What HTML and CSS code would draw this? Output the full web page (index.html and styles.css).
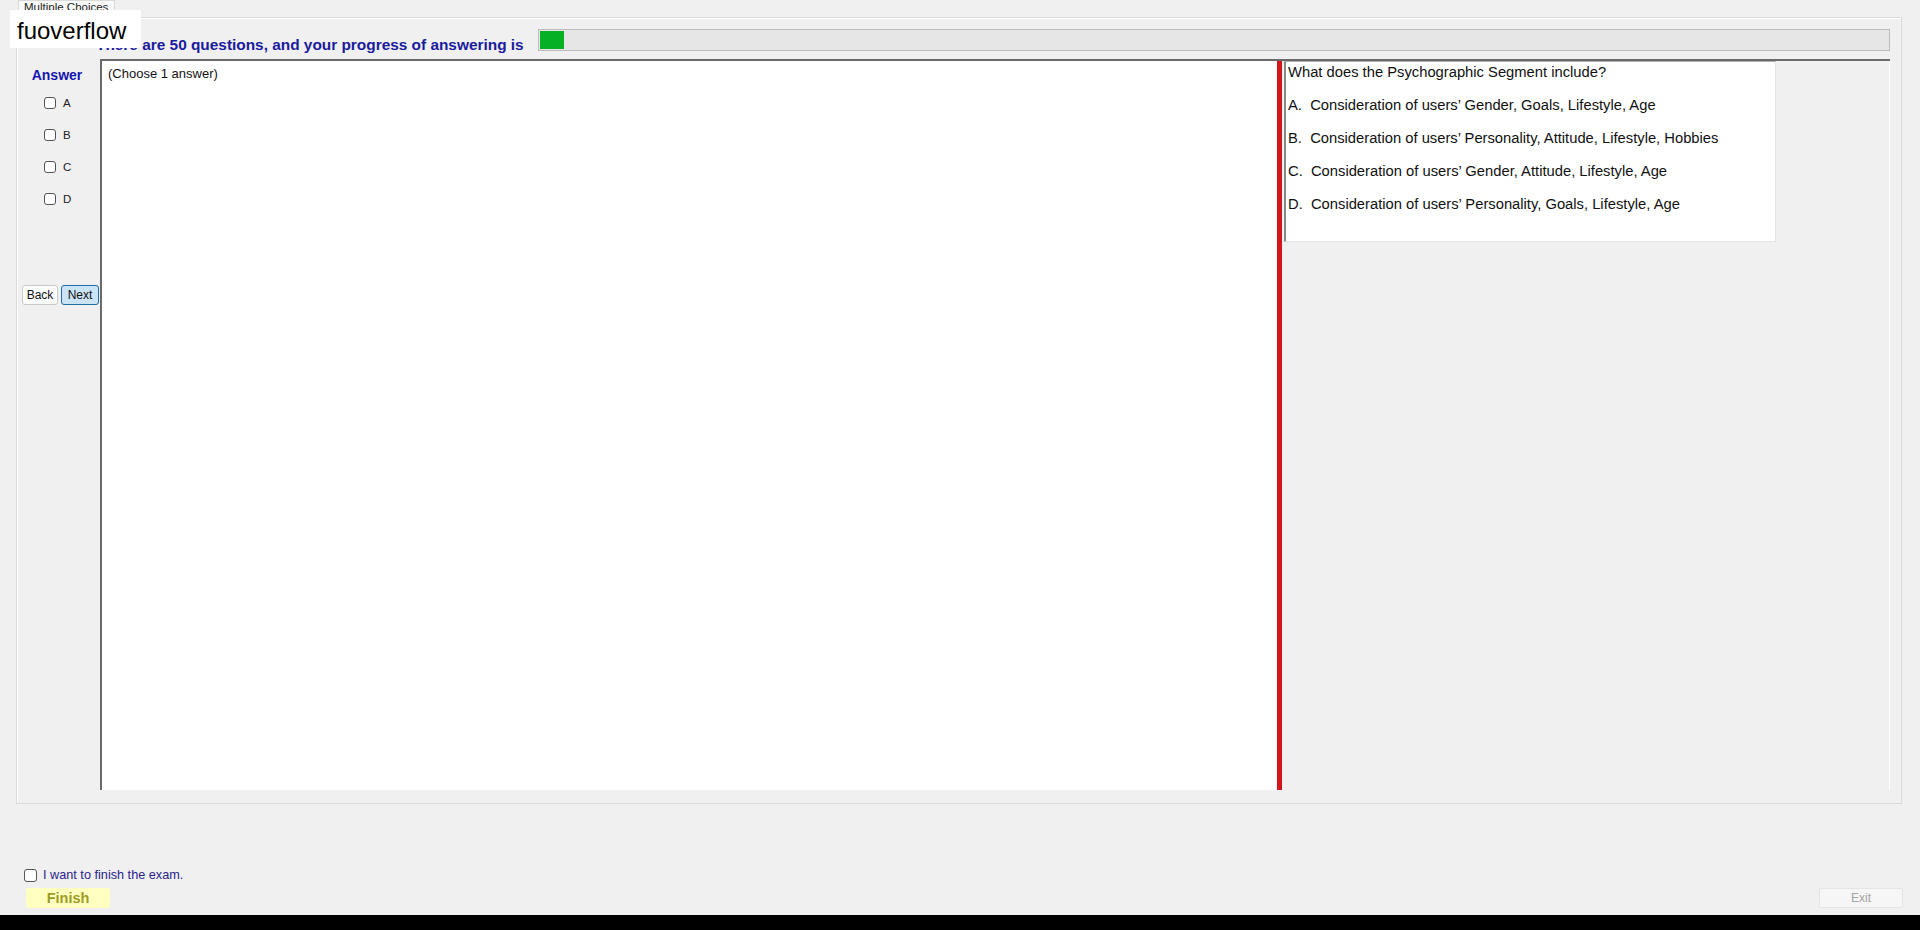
FILE: index.html
```html
<!DOCTYPE html>
<html lang="en">
<head>
  <meta charset="UTF-8">
  <meta name="viewport" content="width=device-width, initial-scale=1.0">
  <title>Multiple Choices</title>
  <link rel="stylesheet" href="styles.css">
</head>
<body>

  <div class="window">
    <div class="tab-strip">
      <div class="tab">Multiple Choices</div>
    </div>

    <div class="tab-panel">
      <div class="progress-row">
        <h1 class="progress-title">There are 50 questions, and your progress of answering is</h1>
        <div class="progress-bar"><div class="progress-fill" style="width: 24px"></div></div>
      </div>

      <div class="content-row">
        <aside class="answer-side">
          <div class="answer-title">Answer</div>
          <ul class="options">
            <li><span class="check"></span>A</li>
            <li><span class="check"></span>B</li>
            <li><span class="check"></span>C</li>
            <li><span class="check"></span>D</li>
          </ul>
          <div class="nav-buttons">
            <button class="btn">Back</button>
            <button class="btn btn-active">Next</button>
          </div>
        </aside>

        <main class="question-frame">
          <div class="question-area">(Choose 1 answer)</div>
          <div class="splitter"></div>
          <div class="detail-pane">
            <div class="question-box">
              <p>What does the Psychographic Segment include?</p>
              <p>A.&nbsp; Consideration of users’ Gender, Goals, Lifestyle, Age</p>
              <p>B.&nbsp; Consideration of users’ Personality, Attitude, Lifestyle, Hobbies</p>
              <p>C.&nbsp; Consideration of users’ Gender, Attitude, Lifestyle, Age</p>
              <p>D.&nbsp; Consideration of users’ Personality, Goals, Lifestyle, Age</p>
            </div>
          </div>
        </main>
      </div>
    </div>

    <footer class="footer">
      <label class="finish-check"><span class="check"></span>I want to finish the exam.</label>
      <div class="footer-buttons">
        <button class="btn-finish">Finish</button>
        <button class="btn-exit" disabled>Exit</button>
      </div>
    </footer>

    <div class="brand">fuoverflow</div>
  </div>

  <div class="taskbar"></div>

</body>
</html>
```

FILE: styles.css
```css
body {
  margin: 0;
  font-family: "Liberation Sans", Arial, sans-serif;
  background-color: #f0f0f0;
  height: 930px;
  overflow: hidden;
}

.window {
  position: relative;
  height: 915px;
  display: flex;
  flex-direction: column;
}

/* tab header */
.tab-strip {
  height: 17px;
  padding-left: 18px;
  display: flex;
  align-items: flex-end;
}

.tab {
  font-size: 11.5px;
  line-height: 13px;
  height: 17px;
  padding: 0 6px 0 5px;
  border: 1px solid #d9d9d9;
  border-bottom: none;
  background-color: #f9f9f9;
  color: #222;
  box-sizing: border-box;
}

.tab-panel {
  height: 787px;
  margin: 0 18px 0 16px;
  border: 1px solid #dadada;
  box-shadow: inset 1px 1px 0 #fff;
  box-sizing: border-box;
  display: flex;
  flex-direction: column;
  padding-top: 11px;
}

/* progress */
.progress-row {
  height: 22px;
  display: flex;
  align-items: flex-end;
  margin-bottom: 8px;
}

.progress-title {
  margin: 0 0 -3px 79px;
  font-size: 15.4px;
  line-height: 18px;
  font-weight: bold;
  color: #1b1b9e;
  white-space: nowrap;
}

.progress-bar {
  flex: 1;
  height: 22px;
  margin: 0 11px 0 14px;
  border: 1px solid #bcbcbc;
  background-color: #e6e6e6;
  box-sizing: border-box;
  padding: 1px;
  display: flex;
}

.progress-fill {
  background-color: #06b025;
}

/* main content */
.content-row {
  height: 731px;
  display: flex;
}

.answer-side {
  width: 83px;
  display: flex;
  flex-direction: column;
}

.answer-title {
  margin-top: 8px;
  font-size: 14px;
  line-height: 17px;
  font-weight: bold;
  color: #1515b0;
  text-align: center;
  padding-right: 3px;
}

.options {
  list-style: none;
  margin: 3px 0 0;
  padding: 0 0 0 27px;
}

.options li {
  height: 32px;
  display: flex;
  align-items: center;
  font-size: 11.5px;
  color: #222;
}

.check {
  display: inline-block;
  width: 12px;
  height: 12px;
  border: 1px solid #555;
  border-radius: 3px;
  background-color: #fff;
  box-sizing: border-box;
  margin-right: 7px;
}

.nav-buttons {
  margin: 70px 0 0 5px;
  display: flex;
  gap: 3px;
}

.btn {
  font-family: "Liberation Sans", Arial, sans-serif;
  font-size: 12px;
  height: 20px;
  width: 36px;
  padding: 0;
  border: 1px solid #c8c8c8;
  border-radius: 3px;
  background-color: #fdfdfd;
  color: #111;
}

.btn-active {
  width: 38px;
  border-color: #1c6ea4;
  background-color: #cce4f7;
}

.question-frame {
  flex: 1;
  margin-right: 11px;
  display: flex;
  border-top: 2px solid #6a6a6a;
}

.question-area {
  width: 1177px;
  background-color: #fff;
  border-left: 2px solid #6a6a6a;
  box-sizing: border-box;
  padding: 5px 6px;
  font-size: 13px;
  line-height: 16px;
  color: #111;
}

.splitter {
  width: 5px;
  background-color: #d3161b;
}

.detail-pane {
  flex: 1;
  border-right: 1px solid #fff;
  padding-left: 2px;
}

.question-box {
  width: 492px;
  height: 181px;
  background-color: #fff;
  border-left: 2px solid #8a8a8a;
  border-top: 1px solid #b0b0b0;
  border-right: 1px solid #e3e3e3;
  border-bottom: 1px solid #e3e3e3;
  box-sizing: border-box;
  padding: 1px 2px;
}

.question-box p {
  margin: 0 0 15px;
  font-size: 14.75px;
  line-height: 18px;
  color: #111;
  white-space: nowrap;
}

/* bottom bar */
.footer {
  flex: 1;
  padding-top: 64px;
  display: flex;
  flex-direction: column;
}

.finish-check {
  height: 14px;
  margin-left: 24px;
  display: flex;
  align-items: center;
  font-size: 12.7px;
  color: #2a1f8c;
}

.finish-check .check {
  width: 13px;
  height: 13px;
  margin-right: 6px;
}

.footer-buttons {
  margin-top: 6px;
  display: flex;
  justify-content: space-between;
  padding: 0 17px 0 26px;
}

.btn-finish {
  width: 84px;
  height: 20px;
  border: none;
  border-radius: 2px;
  background-color: #ffffc0;
  color: #9c9c24;
  font-family: "Liberation Sans", Arial, sans-serif;
  font-size: 14.5px;
  font-weight: bold;
  padding: 0;
}

.btn-exit {
  width: 84px;
  height: 20px;
  border: 1px solid #e4e4e4;
  border-radius: 2px;
  background-color: #f6f6f6;
  color: #a3a3a3;
  font-family: "Liberation Sans", Arial, sans-serif;
  font-size: 12px;
  padding: 0;
}

/* watermark box over the header */
.brand {
  position: absolute;
  top: 10px;
  left: 10px;
  width: 131px;
  height: 38px;
  background-color: #fff;
  font-size: 24px;
  line-height: 36px;
  padding: 3px 0 0 7px;
  box-sizing: border-box;
  color: #000;
}

.taskbar {
  height: 15px;
  background-color: #000;
}
```
